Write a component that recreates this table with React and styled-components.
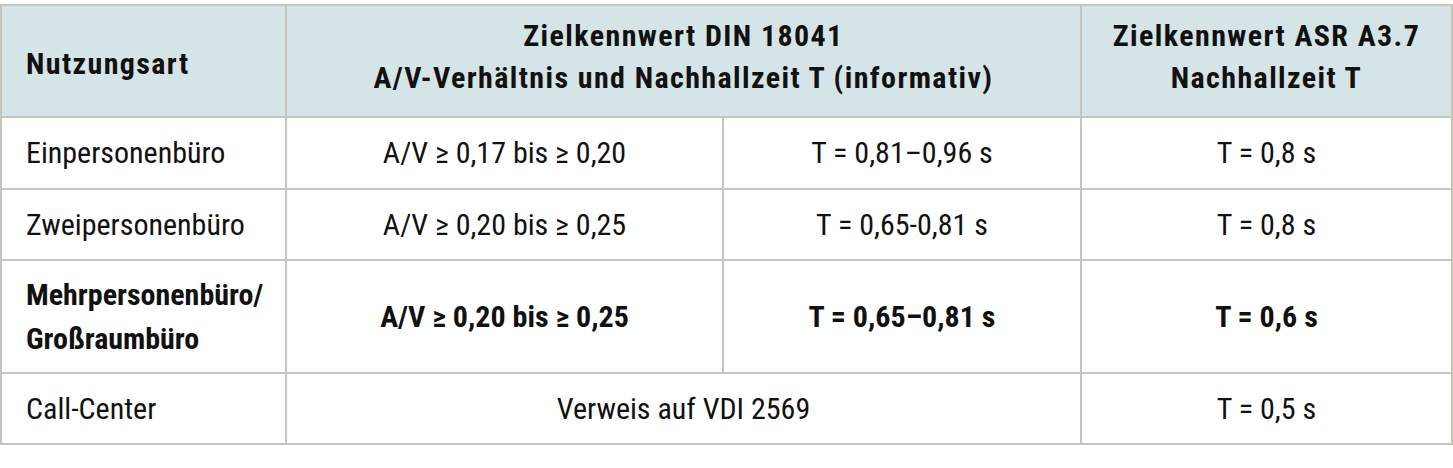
import React from 'react';
import styled, { createGlobalStyle } from 'styled-components';

const Global = createGlobalStyle`
  body {
    margin: 0;
    background: #fff;
    font-family: Roboto, "Liberation Sans", sans-serif;
    color: #111;
  }
`;

const Page = styled.div`
  padding-top: 4px;
`;

const Grid = styled.div`
  display: grid;
  grid-template-columns: 283px 435px 356px 369px;
  grid-template-rows: 110px 70px 69px 111px 69px;
  gap: 2px;
  padding: 2px;
  width: 1453px;
  box-sizing: border-box;
  background: #c6c5bd;
`;

const Cell = styled.div`
  display: flex;
  flex-direction: column;
  justify-content: center;
  align-items: ${(p) => (p.$left ? 'flex-start' : 'center')};
  padding-left: ${(p) => (p.$left ? '24px' : '0')};
  grid-column: ${(p) => (p.$span ? `span ${p.$span}` : 'auto')};
  background: #fff;
  font-size: 30px;
  line-height: 44px;
  font-weight: ${(p) => (p.$bold ? 700 : 400)};
  font-stretch: 75%;
  text-align: ${(p) => (p.$left ? 'left' : 'center')};
  white-space: pre;
`;

const Head = styled(Cell)`
  background: #d5e4e6;
  line-height: 42px;
  font-weight: 700;
  letter-spacing: 1.4px;
  padding-top: ${(p) => (p.$left ? '5px' : '0')};
  padding-bottom: ${(p) => (p.$left ? '0' : '9px')};
`;

const rows = [
  {
    bold: false,
    cells: ['Einpersonenbüro', 'A/V ≥ 0,17 bis ≥ 0,20', 'T = 0,81–0,96 s', 'T = 0,8 s'],
  },
  {
    bold: false,
    cells: ['Zweipersonenbüro', 'A/V ≥ 0,20 bis ≥ 0,25', 'T = 0,65-0,81 s', 'T = 0,8 s'],
  },
  {
    bold: true,
    cells: ['Mehrpersonenbüro/\nGroßraumbüro', 'A/V ≥ 0,20 bis ≥ 0,25', 'T = 0,65–0,81 s', 'T = 0,6 s'],
  },
];

export default function App() {
  return (
    <Page>
      <Global />
      <Grid>
        <Head $left>Nutzungsart</Head>
        <Head $span={2}>
          {'Zielkennwert DIN 18041\nA/V-Verhältnis und Nachhallzeit T (informativ)'}
        </Head>
        <Head>{'Zielkennwert ASR A3.7\nNachhallzeit T'}</Head>

        {rows.map((r) =>
          r.cells.map((c, i) => (
            <Cell key={r.cells[0] + i} $bold={r.bold} $left={i === 0}>
              {c}
            </Cell>
          ))
        )}

        <Cell $left>Call-Center</Cell>
        <Cell $span={2}>Verweis auf VDI 2569</Cell>
        <Cell>T = 0,5 s</Cell>
      </Grid>
    </Page>
  );
}
